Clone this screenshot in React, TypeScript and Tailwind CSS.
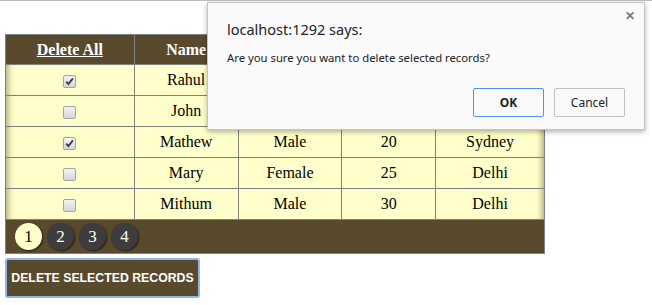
import React from "react";

const rows = [
  { checked: true, name: "Rahul", gender: "Male", age: "24", city: "London" },
  { checked: false, name: "John", gender: "Male", age: "28", city: "New York" },
  { checked: true, name: "Mathew", gender: "Male", age: "20", city: "Sydney" },
  { checked: false, name: "Mary", gender: "Female", age: "25", city: "Delhi" },
  { checked: false, name: "Mithum", gender: "Male", age: "30", city: "Delhi" },
];

function Check({ on }: { on: boolean }) {
  return (
    <span className="inline-flex h-[13px] w-[13px] items-center justify-center rounded-[2px] border border-[#a3a3a3] bg-gradient-to-b from-[#f4f4f4] to-[#d6d6d6] align-middle">
      {on && (
        <svg width="9" height="9" viewBox="0 0 9 9">
          <path d="M1.2 4.6 L3.4 7 L7.9 1.4" fill="none" stroke="#3a3a3a" strokeWidth="1.8" />
        </svg>
      )}
    </span>
  );
}

const td = "border border-[#808080] font-['Liberation_Serif',serif] font-normal text-[16px] text-black";

export default function App() {
  return (
    <div className="relative h-[305px] w-[652px] overflow-hidden bg-white font-['Liberation_Serif',serif] text-[16px] text-black">
      <div className="h-px w-full bg-[#bdbdbd]" />
      <div className="pl-[5px] pt-[33px]">
        <table className="w-[540px] border-collapse border border-[#808080] font-['Liberation_Serif',serif]">
          <colgroup>
            <col className="w-[129px]" />
            <col className="w-[104px]" />
            <col className="w-[104px]" />
            <col className="w-[94px]" />
            <col className="w-[109px]" />
          </colgroup>
          <thead>
            <tr className="h-[30px] bg-[#594a2e] text-white">
              <th className="border border-[#808080] font-bold underline">Delete All</th>
              <th className="border border-[#808080] font-bold">Name</th>
              <th className="border border-[#808080] font-bold">Gender</th>
              <th className="border border-[#808080] font-bold">Age</th>
              <th className="border border-[#808080] font-bold">City</th>
            </tr>
          </thead>
          <tbody>
            {rows.map((r) => (
              <tr key={r.name} className="h-[31px] bg-[#ffffcc] text-center">
                <td className={td + " shadow-[inset_7px_0_6px_-5px_rgba(60,60,0,0.45)]"}>
                  <Check on={r.checked} />
                </td>
                <td className={td}>{r.name}</td>
                <td className={td}>{r.gender}</td>
                <td className={td}>{r.age}</td>
                <td className={td + " shadow-[inset_-7px_0_6px_-5px_rgba(60,60,0,0.45)]"}>{r.city}</td>
              </tr>
            ))}
            <tr className="h-[34px] bg-[#594a2e]">
              <td colSpan={5} className="border border-[#808080] px-[9px]">
                <div className="flex gap-[5px]">
                  {["1", "2", "3", "4"].map((p, i) => (
                    <span
                      key={p}
                      className={
                        i === 0
                          ? "flex h-[27px] w-[27px] items-center justify-center rounded-full bg-[#ffffcc] text-[17px] text-black shadow-[1px_1px_2px_rgba(0,0,0,0.6)]"
                          : "flex h-[27px] w-[27px] items-center justify-center rounded-full bg-[#3d3d3d] text-[17px] text-white shadow-[1px_1px_2px_rgba(0,0,0,0.6)]"
                      }
                    >
                      {p}
                    </span>
                  ))}
                </div>
              </td>
            </tr>
          </tbody>
        </table>
        <button className="mt-[4px] flex h-[40px] w-[195px] items-center justify-center rounded-[3px] border-2 border-[#8fb5ec] bg-[#594a2e] font-['Liberation_Sans',sans-serif] text-[12.3px] font-bold text-white">
          DELETE SELECTED RECORDS
        </button>
      </div>

      <div className="absolute left-[207px] top-[2px] h-[128px] w-[438px] border border-[#c4c4c4] bg-[#fafafa] font-['Noto_Sans',sans-serif] shadow-[0_2px_5px_rgba(0,0,0,0.3)]">
        <div className="absolute right-[9px] top-[7px] text-[12px] font-bold leading-none text-[#777]">✕</div>
        <div className="pl-[19px] pt-[17px] text-[14.5px] leading-[18px] text-[#222]">localhost:1292 says:</div>
        <div className="pl-[19px] pt-[12px] text-[11.3px] leading-[16px] text-[#222]">Are you sure you want to delete selected records?</div>
        <div className="mt-[22px] flex justify-end gap-[10px] pr-[19px]">
          <button className="h-[29px] w-[71px] rounded-[2px] border border-[#4d90fe] bg-[#f9f9f9] text-[12px] font-bold text-[#222]">OK</button>
          <button className="h-[29px] w-[71px] rounded-[2px] border border-[#c0c0c0] bg-[#f9f9f9] text-[12px] text-[#222]">Cancel</button>
        </div>
      </div>
    </div>
  );
}
